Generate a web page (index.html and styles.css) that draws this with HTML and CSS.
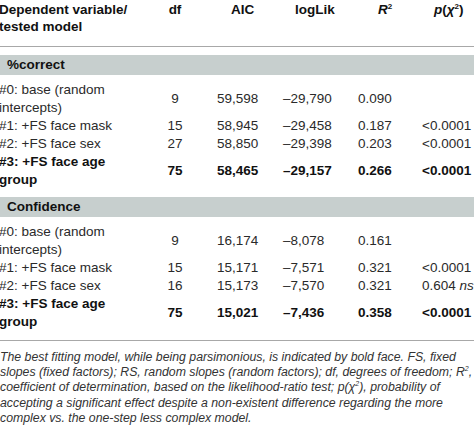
FILE: index.html
```html
<!DOCTYPE html>
<html lang="en">
<head>
    <meta charset="UTF-8">
    <title>Model comparison</title>
    <link rel="stylesheet" href="styles.css">
</head>
<body>
    <table class="models">
        <colgroup>
            <col class="c-name">
            <col class="c-df">
            <col class="c-aic">
            <col class="c-loglik">
            <col class="c-r2">
            <col class="c-p">
        </colgroup>
        <thead>
            <tr>
                <th class="name">Dependent variable/<br>tested model</th>
                <th class="df">df</th>
                <th class="aic">AIC</th>
                <th class="loglik">logLik</th>
                <th class="r2"><i>R</i><sup>2</sup></th>
                <th class="p"><i>p</i>(<i>χ</i><sup>2</sup>)</th>
            </tr>
        </thead>
        <tbody>
            <tr class="band"><td colspan="6"><div>%correct</div></td></tr>
            <tr class="first">
                <td class="name">#0: base (random<br>intercepts)</td>
                <td class="df">9</td>
                <td class="aic">59,598</td>
                <td class="loglik">–29,790</td>
                <td class="r2">0.090</td>
                <td class="p"></td>
            </tr>
            <tr>
                <td class="name">#1: +FS face mask</td>
                <td class="df">15</td>
                <td class="aic">58,945</td>
                <td class="loglik">–29,458</td>
                <td class="r2">0.187</td>
                <td class="p">&lt;0.0001</td>
            </tr>
            <tr>
                <td class="name">#2: +FS face sex</td>
                <td class="df">27</td>
                <td class="aic">58,850</td>
                <td class="loglik">–29,398</td>
                <td class="r2">0.203</td>
                <td class="p">&lt;0.0001</td>
            </tr>
            <tr class="best">
                <td class="name">#3: +FS face age<br>group</td>
                <td class="df">75</td>
                <td class="aic">58,465</td>
                <td class="loglik">–29,157</td>
                <td class="r2">0.266</td>
                <td class="p">&lt;0.0001</td>
            </tr>
            <tr class="band"><td colspan="6"><div>Confidence</div></td></tr>
            <tr class="first">
                <td class="name">#0: base (random<br>intercepts)</td>
                <td class="df">9</td>
                <td class="aic">16,174</td>
                <td class="loglik">–8,078</td>
                <td class="r2">0.161</td>
                <td class="p"></td>
            </tr>
            <tr>
                <td class="name">#1: +FS face mask</td>
                <td class="df">15</td>
                <td class="aic">15,171</td>
                <td class="loglik">–7,571</td>
                <td class="r2">0.321</td>
                <td class="p">&lt;0.0001</td>
            </tr>
            <tr>
                <td class="name">#2: +FS face sex</td>
                <td class="df">16</td>
                <td class="aic">15,173</td>
                <td class="loglik">–7,570</td>
                <td class="r2">0.321</td>
                <td class="p">0.604 <i>ns</i></td>
            </tr>
            <tr class="best end">
                <td class="name">#3: +FS face age<br>group</td>
                <td class="df">75</td>
                <td class="aic">15,021</td>
                <td class="loglik">–7,436</td>
                <td class="r2">0.358</td>
                <td class="p">&lt;0.0001</td>
            </tr>
        </tbody>
    </table>

    <p class="note">The best fitting model, while being parsimonious, is indicated by bold face. FS, fixed<br>slopes (fixed factors); RS, random slopes (random factors); df, degrees of freedom; <i>R</i><sup>2</sup>,<br>coefficient of determination, based on the likelihood-ratio test; p(χ<sup>2</sup>), probability of<br>accepting a significant effect despite a non-existent difference regarding the more<br>complex vs. the one-step less complex model.</p>
</body>
</html>
```

FILE: styles.css
```css
body {
    margin: 0;
    padding: 0;
    background: #ffffff;
    font-family: "Liberation Sans", Arial, sans-serif;
    color: #2a2a2a;
    width: 474px;
    overflow: hidden;
}

.models {
    border-collapse: collapse;
    table-layout: fixed;
    width: 475px;
    margin-left: -1px;
    font-size: 13.5px;
}

.c-name { width: 156px; }
.c-df { width: 40px; }
.c-aic { width: 75px; }
.c-loglik { width: 75px; }
.c-r2 { width: 65px; }
.c-p { width: 64px; }

.models th,
.models td {
    padding: 0;
    text-align: left;
    vertical-align: middle;
    white-space: nowrap;
}

.models td {
    line-height: 18px;
}

/* header */
.models thead th {
    color: #111;
    font-weight: bold;
    line-height: 17px;
    padding-top: 1px;
    padding-bottom: 11px;
    border-bottom: 1px solid #a8a8a8;
    vertical-align: top;
}

.models thead th.df { text-align: center; }
.models thead th.aic { padding-left: 36px; }
.models thead th.loglik { padding-left: 25px; }
.models thead th.r2 { padding-left: 33px; }
.models thead th.p { padding-left: 24px; }

sup {
    font-size: 8px;
    line-height: 0;
    vertical-align: 5px;
}

/* grey section band */
.band td {
    padding-top: 8px;
}

.band div {
    background: #c7cfce;
    color: #111;
    font-weight: bold;
    line-height: 20px;
    padding-left: 8px;
}

.models td.df { text-align: center; }
.models td.aic { padding-left: 22px; }
.models td.loglik { padding-left: 13px; }
.models td.r2 { padding-left: 13px; }
.models td.p { padding-left: 12px; }

.first td { padding-top: 6px; }

.end td {
    padding-bottom: 9px;
    border-bottom: 1px solid #a8a8a8;
}

.best td {
    font-weight: bold;
    color: #111;
}

.note {
    margin: 9px 0 0 0;
    font-size: 12.3px;
    line-height: 15.2px;
    font-style: italic;
    color: #333;
    white-space: nowrap;
}

.note sup {
    font-size: 7px;
}
```
